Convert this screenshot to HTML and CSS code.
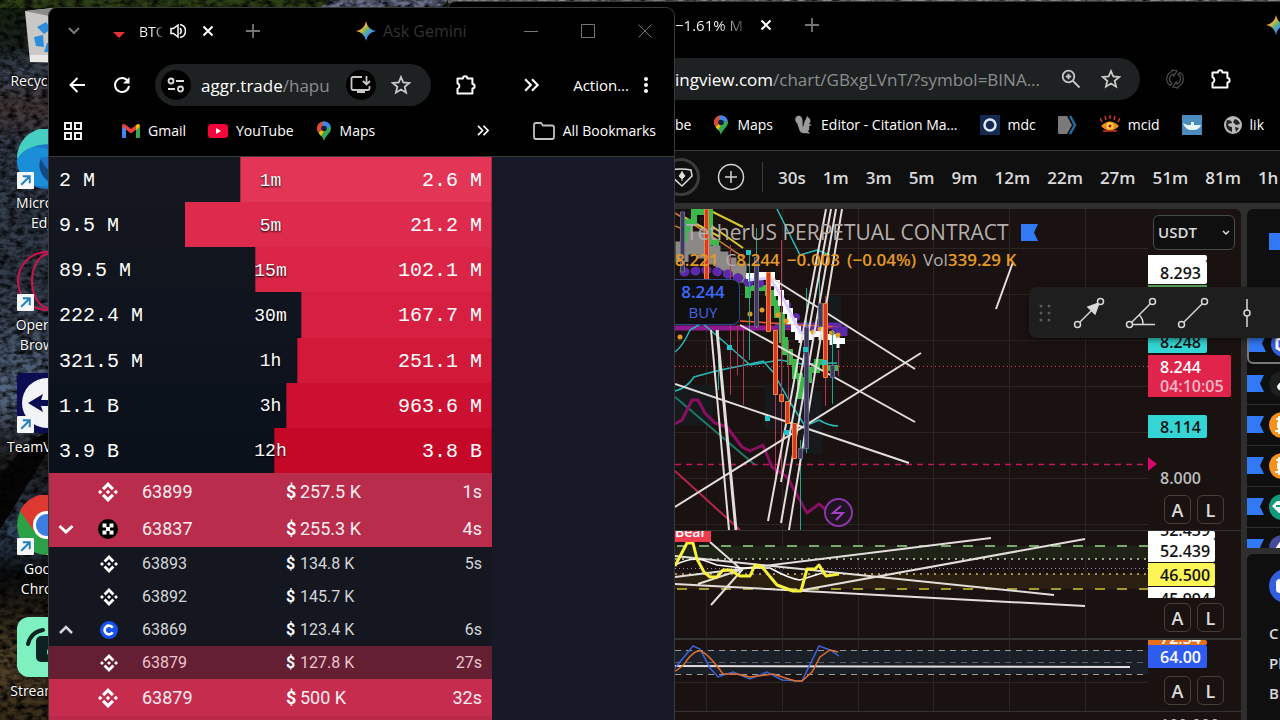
FILE: index.html
```html
<!DOCTYPE html>
<html lang="en">
<head>
    <meta charset="UTF-8">
    <meta name="viewport" content="width=device-width, initial-scale=1.0">
    <title>Desktop</title>
    <link rel="stylesheet" href="styles.css">
</head>
<body>

<!-- Shared icons -->
<svg class="defs" width="0" height="0">
    <defs>
        <linearGradient id="gem" x1="0" y1="0" x2="1" y2="1">
            <stop offset="0" stop-color="#f0453a"/>
            <stop offset=".35" stop-color="#e9b43c"/>
            <stop offset=".5" stop-color="#5fb576"/>
            <stop offset=".65" stop-color="#4a90f0"/>
            <stop offset="1" stop-color="#3b7de8"/>
        </linearGradient>
    </defs>
    <symbol id="i-gemini" viewBox="0 0 20 20"><path fill="url(#gem)" d="M10 0q1.500 8.500 10 10q-8.500 1.500-10 10q-1.500-8.500-10-10q8.500-1.500 10-10z"/></symbol>
    <symbol id="i-close" viewBox="0 0 12 12"><path d="M1.500 1.500l9 9M10.500 1.500l-9 9" fill="none" stroke="currentColor" stroke-width="2"/></symbol>
    <symbol id="i-plus" viewBox="0 0 14 14"><path d="M7 0v14M0 7h14" fill="none" stroke="currentColor" stroke-width="1.800"/></symbol>
    <symbol id="i-star" viewBox="0 0 20 20"><path d="M10 2l2.300 5.500 5.900.5-4.500 3.900 1.400 5.800L10 14.600l-5.100 3.100 1.400-5.800L1.800 8l5.900-.5z" fill="none" stroke="currentColor" stroke-width="1.800"/></symbol>
    <symbol id="i-puzzle" viewBox="0 0 22 22"><path d="M2.500 4.500h5.500a2.200 2.200 0 0 1 4.400 0h5v5.500a2.200 2.200 0 0 1 0 4.400v5H2.500v-4.500a3 3 0 0 0 0-5.600z" fill="none" stroke="currentColor" stroke-width="2" stroke-linejoin="round"/></symbol>
    <symbol id="i-more" viewBox="0 0 14 12"><path d="M1 1l5 5-5 5M7 1l5 5-5 5" fill="none" stroke="currentColor" stroke-width="1.800"/></symbol>
    <symbol id="i-pin" viewBox="0 0 16 20">
        <path fill="#34a853" d="M8 20C7 15 1 12 1 7.500A7 7 0 0 1 15 7.500C15 12 9 15 8 20z"/>
        <path fill="#fbbc04" d="M2.500 12L12 3l-7 12z"/>
        <path fill="#4285f4" d="M6 .8A7 7 0 0 1 14.500 5L8 9z"/>
        <path fill="#ea4335" d="M1 8A7 7 0 0 1 7 .6L5 10 2 11z"/>
        <circle cx="8" cy="7.500" r="2.800" fill="#10213f"/>
    </symbol>
    <symbol id="i-binance" viewBox="0 0 20 20">
        <path fill="currentColor" d="M10 0l6 6-2.200 2.200L10 4.400 6.200 8.200 4 6zM2.200 7.800L4.400 10l-2.200 2.200L0 10zM10 7.800l2.200 2.200-2.200 2.200L7.800 10zM17.800 7.800L20 10l-2.200 2.200-2.200-2.200zM6.200 11.800l3.800 3.800 3.800-3.800L16 14l-6 6-6-6z"/>
    </symbol>
    <symbol id="i-link" viewBox="0 0 16 16"><rect width="16" height="16" rx="1" fill="#f4f6f8"/><path d="M4 12l7.500-7.500M5.500 4h6.500v6.500" fill="none" stroke="#1f7fc2" stroke-width="1.800"/></symbol>
    <symbol id="i-flag" viewBox="0 0 17 17"><path fill="#3179f5" d="M0 0h17l-4 8.500 4 8.500H0z"/></symbol>
</svg>

<svg class="wallpaper" viewBox="0 0 1280 720" preserveAspectRatio="none">
    <defs>
        <linearGradient id="rock" x1="0" y1="0" x2="0" y2="1">
            <stop offset="0" stop-color="#12200c"/>
            <stop offset=".06" stop-color="#1a231c"/>
            <stop offset=".1" stop-color="#3c4656"/>
            <stop offset=".15" stop-color="#463836"/>
            <stop offset=".2" stop-color="#343d4d"/>
            <stop offset=".4" stop-color="#333d4a"/>
            <stop offset=".55" stop-color="#566883"/>
            <stop offset=".64" stop-color="#1c1a1a"/>
            <stop offset=".74" stop-color="#34465f"/>
            <stop offset=".8" stop-color="#0b0c0c"/>
            <stop offset=".92" stop-color="#54432a"/>
            <stop offset="1" stop-color="#362b18"/>
        </linearGradient>
        <filter id="grain" x="0" y="0" width="1" height="1">
            <feTurbulence type="fractalNoise" baseFrequency=".12 .2" numOctaves="4" seed="4"/>
            <feColorMatrix values="0 0 0 0 0  0 0 0 0 0  0 0 0 0 0  2 0 0 0 -.7"/>
        </filter>
    </defs>
    <rect width="1280" height="720" fill="url(#rock)"/>
    <path d="M0 0h330v8H0z" fill="#2c3f16"/>
    <path d="M330 0h118l-6 8H320z" fill="#6a6f8a"/>
    <path d="M448 0h832v3H448z" fill="#8d8a88"/>
    <path d="M0 475l30-35 19-8v18L18 500 0 530z" fill="#060606"/>
    <rect width="1280" height="720" filter="url(#grain)"/>
</svg>

<!-- Desktop shortcuts -->
<nav class="shortcuts">
    <a class="shortcut" href="#">
        <svg width="60" height="60" viewBox="0 0 60 60"><path d="M8 4l28-3 18 5-5 50-36-1z" fill="#c9c8c6"/><path d="M8 4l28-3 18 5-22 3z" fill="#8d8b88"/><path d="M13 48h38v7H13z" fill="#e9e8e6"/><path d="M20 20l9-5 5 7-7 5zM17 30l9-2 1 12-8-1zM30 36h12l-4 9H27z" fill="#2b8ddc"/></svg>
        <span>Recycle Bin</span>
    </a>
    <a class="shortcut" href="#">
        <svg width="60" height="60" viewBox="0 0 60 60"><circle cx="30" cy="30" r="30" fill="#1c76c8"/><path d="M0 30A30 30 0 0 1 60 28C40 8 12 14 0 30z" fill="#45cfc0"/><path d="M0 32C6 14 30 14 40 28H24c-4 6-2 20 12 28C14 62 0 46 0 32z" fill="#1a8fd8"/><path d="M24 30c-4 8 0 20 14 26 8 0 14-6 18-12-14 6-26 0-32-14z" fill="#124a86"/><use href="#i-link" y="43" width="17" height="17"/></svg>
        <span>Microsoft Edge</span>
    </a>
    <a class="shortcut" href="#">
        <svg width="60" height="60" viewBox="0 0 60 60"><g fill="none" stroke="#d0134f" stroke-width="2"><circle cx="30" cy="30" r="29"/><ellipse cx="32" cy="30" rx="17" ry="27"/></g><use href="#i-link" y="43" width="17" height="17"/></svg>
        <span>Opera GX Browser</span>
    </a>
    <a class="shortcut" href="#">
        <svg width="60" height="60" viewBox="0 0 60 60"><rect width="60" height="60" rx="5" fill="#0c0c52"/><circle cx="30" cy="30" r="25" fill="#f2f3f7"/><path d="M11 30l15-9-2 6h12l-2-6 15 9-15 9 2-6H24l2 6z" fill="#0c0c52"/><use href="#i-link" y="43" width="17" height="17"/></svg>
        <span>TeamViewer</span>
    </a>
    <a class="shortcut" href="#">
        <svg width="60" height="60" viewBox="0 0 60 60"><circle cx="30" cy="30" r="30" fill="#2da147"/><path d="M3 16A30 30 0 0 1 57 16H30L17 36z" fill="#dc3a30"/><path d="M57 16A30 30 0 0 1 30 60l12-22-12-22z" fill="#f9c32e"/><circle cx="30" cy="30" r="14" fill="#fff"/><circle cx="30" cy="30" r="11" fill="#3b7de0"/><use href="#i-link" y="43" width="17" height="17"/></svg>
        <span>Google Chrome</span>
    </a>
    <a class="shortcut" href="#">
        <svg width="60" height="60" viewBox="0 0 60 60"><rect width="60" height="60" rx="12" fill="#7ff0c0"/><path d="M11 27q3-12 15-14" fill="none" stroke="#0d2321" stroke-width="4" stroke-linecap="round"/><rect x="19" y="19" width="34" height="26" rx="5" fill="#0d2321"/><circle cx="36" cy="35" r="6" fill="#7ff0c0"/></svg>
        <span>Streamlabs</span>
    </a>
</nav>

<!-- Back window: chart -->
<section class="window window-chart">
    <div class="tabstrip">
        <span class="tab-title tab-fade">−1.61% M</span>
        <button class="icon-btn" aria-label="Close tab"><svg width="12" height="12"><use href="#i-close"/></svg></button>
        <button class="icon-btn muted" aria-label="New tab"><svg width="14" height="14"><use href="#i-plus"/></svg></button>
        <svg class="push" width="20" height="20"><use href="#i-gemini"/></svg>
    </div>
    <div class="toolbar">
        <div class="omnibox">
            <div class="url"><b>ingview.com</b>/chart/GBxgLVnT/?symbol=BINA...</div>
            <button class="icon-btn soft" aria-label="Zoom"><svg width="20" height="20" viewBox="0 0 20 20"><g fill="none" stroke="currentColor" stroke-width="1.800"><circle cx="7.500" cy="7.500" r="5.800"/><path d="M12 12l6.500 6.500M7.500 4.800v5.400M4.800 7.500h5.400"/></g></svg></button>
            <button class="icon-btn soft" aria-label="Bookmark"><svg width="20" height="20"><use href="#i-star"/></svg></button>
        </div>
        <button class="icon-btn" aria-label="Sync"><svg width="20" height="20" viewBox="0 0 20 20"><g fill="none" stroke="#4d4d4d" stroke-width="1.200"><path d="M7 2.500A8 8 0 0 0 5 16.500l2-1.800A5.500 5.500 0 0 1 8 5l1 2 3-5-5-1z"/><path d="M13 17.500A8 8 0 0 0 15 3.500l-2 1.800A5.500 5.500 0 0 1 12 15l-1-2-3 5 5 1z"/></g></svg></button>
        <button class="icon-btn" aria-label="Extensions"><svg width="22" height="22"><use href="#i-puzzle"/></svg></button>
    </div>
    <div class="bookmarks">
        <a href="#">be</a>
        <a href="#"><svg width="16" height="20"><use href="#i-pin"/></svg>Maps</a>
        <a href="#"><svg width="18" height="20" viewBox="0 0 18 20"><path d="M5 1c-4-1-6 3-4 6 2 2 2 4 3 7 1 4 4 5 7 4l4 1-2-3c2-2 1-4 1-5l3-1-3-1c2-2 2-4 0-6l-2-2-1 3c-2 2-2 6-3 8C7 10 9 3 5 1z" fill="#9b9b9b"/></svg>Editor - Citation Ma...</a>
        <a href="#"><svg width="20" height="20" viewBox="0 0 20 20"><rect width="20" height="20" fill="#14294f"/><circle cx="10" cy="10" r="5.500" fill="none" stroke="#dfe6f5" stroke-width="2.500"/></svg>mdc</a>
        <a href="#" aria-label="Bookmark"><svg width="20" height="20" viewBox="0 0 20 20"><path d="M0 2q0-1 1-1h8l5 9-5 9H1q-1 0-1-1z" fill="#7a7a7a"/><path d="M12 1l5 9-5 9" fill="none" stroke="#1f6fa5" stroke-width="2.500"/></svg></a>
        <a href="#"><svg width="20" height="20" viewBox="0 0 20 20"><path d="M1 11q9-9 18 0-9 9-18 0z" fill="#f08a1c"/><circle cx="10" cy="11" r="3.500" fill="#ffd24a"/><circle cx="10" cy="11" r="1.500" fill="#a01010"/><path d="M2 7L0 3M6 5L5 1M10 4V0M14 5l1-4M18 7l2-4M3 16h14" stroke="#d8321c" stroke-width="1.500"/></svg>mcid</a>
        <a href="#" aria-label="Bookmark"><svg width="20" height="20" viewBox="0 0 20 20"><rect width="20" height="20" fill="#4a8cc0"/><path d="M1 8l4 2h4V7h3v3h7q-2 5-7 5H8q-5-1-7-7z" fill="#e8f3fa"/></svg></a>
        <a href="#"><svg width="18" height="18" viewBox="0 0 18 18"><circle cx="9" cy="9" r="9" fill="#b9b9b9"/><path d="M3 4q5 0 5 3l-4 1q0 3 4 3v5q-6-2-6-8zM11 3q4 1 5 5l-4 1-3-3zM11 11l4 1-3 4z" fill="#222"/></svg>lik</a>
    </div>

    <div class="intervals">
        <button class="icon-btn" aria-label="Alert"><svg width="38" height="38" viewBox="0 0 38 38"><circle cx="19" cy="19" r="17.500" fill="none" stroke="#3c3c3c" stroke-width="3"/><path d="M9 12q10-2 20 0l1 6-10 10L9 18z" fill="none" stroke="#dcdcdc" stroke-width="1.500"/><path d="M20 13v10M20 14l3 4-3 3-3-3z" fill="#dcdcdc" stroke="#dcdcdc"/></svg></button>
        <button class="icon-btn" aria-label="Add"><svg width="28" height="28" viewBox="0 0 28 28"><circle cx="14" cy="14" r="12.500" fill="none" stroke="#d4d4d4" stroke-width="1.500"/><path d="M14 8v12M8 14h12" stroke="#d4d4d4" stroke-width="1.500"/></svg></button>
        <span class="divider"></span>
        <button>30s</button>
        <button>1m</button>
        <button>3m</button>
        <button>5m</button>
        <button>9m</button>
        <button>12m</button>
        <button>22m</button>
        <button>27m</button>
        <button>51m</button>
        <button>81m</button>
        <button>1h</button>
    </div>

    <div class="workspace">
        <div class="chart">
            <div class="pane pane-main">
                <svg class="plot" viewBox="675 209 473 321" preserveAspectRatio="xMinYMin slice">
                    <path class="grid" d="M706.500 209v321M782.500 209v321M858.500 209v321M933.500 209v321M1009.500 209v321M1085.500 209v321M675 248.500h473M675 294.500h473M675 340.500h473M675 386.500h473M675 432.500h473M675 478.500h473M675 524.500h473"/>
                    <path fill="#171a1d" d="M675 385h38v40h-38zM765 385h30v45h-30zM793 390h29v64h-29zM826 296h15v85h-15z"/>
                    <path stroke="#1c7a6a" stroke-width="2" fill="none" d="M675 397l80 68"/>
                    <path stroke="#b5254a" stroke-width="2" fill="none" d="M675 471l65 59"/>
                    <path stroke="#e0404f" stroke-dasharray="1 3" d="M675 366.500h473"/>
                    <path stroke="#c2185b" stroke-dasharray="6 5" stroke-width="1.500" d="M675 464.500h473"/>
                    <!-- indicator ribbons -->
                    <path stroke="#8f1a8f" stroke-width="5" fill="none" d="M675 328h105l62-2"/>
                    <path stroke="#5a2aa8" stroke-width="5" fill="none" d="M775 325h63l4 5"/>
                    <path stroke="#f05a28" stroke-width="1.500" fill="none" d="M740 321l60 4 38 2"/>
                    <path stroke="#28b8b8" stroke-width="1.500" fill="none" d="M675 352q8-6 15-22l12-7 28 24 20 18 30-5 22 4 35-1M675 391q12-3 19-14 20-6 56-13l13-3 10 11 17 30 15 24 14-6q10 6 19 6M777 209l23 46 17-5 13 5"/>
                    <path stroke="#8a0f62" stroke-width="3" fill="none" stroke-linejoin="round" d="M675 424l7-4 10-20 6 0 7 13 10 10 12 4 15 20 8 4 13-6 9 22 15 10 20 36 12-9 7 6"/>
                    <path stroke="#d9c82c" stroke-width="2" fill="none" d="M707 209l36 18M706 222l37 26M680 215l40 22"/>
                    <path stroke="#c77a34" stroke-width="1.500" fill="none" d="M675 213l32 20 36 24M675 226l30 12"/>
                    <path stroke="#3db84a" stroke-width="6" fill="none" d="M688 252v-30h6v-10h16v30h6v14M748 298v-10h20v5h5v10h4v12h5v25h3v12h5v10h5v14h5v20h6v-16h3v-10h8v-8h8v6h14"/>
                    <path stroke="#8c8886" stroke-width="13" fill="none" d="M682 262v-14h12v-10h10v14h10v6h8v6h8v6h10v6h6"/>
                    <path stroke="#5a2aa8" stroke-width="9" stroke-dasharray="1 10" stroke-linecap="round" fill="none" d="M684 272l25-2 23 5 18 8h26"/>
                    <path stroke="#5a2aa8" stroke-width="7" fill="none" d="M800 330h22M832 330h12v6"/>
                    <g fill="#5a2aa8"><circle cx="778" cy="291" r="4"/><circle cx="787" cy="305" r="4"/><circle cx="796" cy="317" r="4"/></g>
                    <path stroke="#fff" stroke-width="6" fill="none" d="M746 276h16v-1h10v8h5v10h4v10h5v8h4v10h4v8h4v8h13v-3h14v3h8v4h12"/>
                    <path stroke="#fff" stroke-width="3" fill="none" d="M800 331v12M820 330v10M831 331v14M838 336v12"/>
                    <path stroke="#d9d0ff" stroke-width="3" fill="none" d="M748 280l22-2 14 22 17 34"/>
                    <g fill="#e59a24"><circle cx="680" cy="337" r="2.500"/><circle cx="750" cy="314" r="2.500"/><circle cx="762" cy="310" r="2.500"/><circle cx="778" cy="315" r="2.500"/><circle cx="786" cy="321" r="2.500"/><circle cx="813" cy="332" r="2.500"/><circle cx="820" cy="329" r="2.500"/><circle cx="832" cy="333" r="2.500"/><circle cx="838" cy="335" r="2.500"/></g>
                    <!-- wicks -->
                    <path stroke="#b33655" fill="none" d="M730.500 245v150M737.500 325v50M743.500 325v80M775.500 390v90M781.500 240v242M788.500 340v60M825.500 296v110M838.500 350v26"/>
                    <path stroke="#22a58e" fill="none" d="M749.500 250v110M756.500 228v100M718.500 330v60M806.500 288v165M819.500 270v56M800.500 440v90M832.500 330v74"/>
                    <!-- trend lines -->
                    <g class="trend">
                        <path d="M770 277l145 92M740 325l175 97M675 507l246-154M675 384l234 79"/>
                        <path d="M711 330l18 200"/>
                        <path stroke-width="3" d="M717 330l19 200"/>
                        <path d="M826 209l-58 312M831 209l-50 273M836 209l-55 314M842 209l-53 321M1013 262l-17 47"/>
                    </g>
                    <!-- candles -->
                    <g fill="#d9372c" stroke="#f08a30"><path d="M704.500 209h4v71h-4zM766.500 272.500h4v59h-4zM773.500 330.500h4v64h-4zM779.500 394.500h4v7h-4zM785.500 401.500h4v22h-4zM792.500 423.500h4v35h-4zM823.500 303.500h4v74h-4z"/></g>
                    <g fill="#3d3a5c" stroke="#6a678c"><path d="M680.500 212h4v60h-4zM754.500 257.500h4v69h-4zM804.500 327.500h4v121h-4zM818.500 303.500h4v23h-4zM798.500 448.500h4v10h-4zM830.500 365.500h4v12h-4z"/></g>
                    <path fill="#22c5cc" d="M727 345h5v5h-5zM765 416h5v5h-5zM784 430h5v5h-5zM803 347h5v5h-5zM822 360h5v5h-5zM746 250h5v5h-5z"/>
                    <circle cx="838.500" cy="512.500" r="13.500" fill="#1e1422" stroke="#8e35a8" stroke-width="2"/>
                    <path d="M841 506l-8 7h10l-7 7" fill="none" stroke="#a63fc4" stroke-width="2"/>
                </svg>
                <div class="legend">
                    <h1>TetherUS PERPETUAL CONTRACT <svg width="17" height="17"><use href="#i-flag"/></svg></h1>
                    <p><b>8.221</b><span>C<b>8.244</b></span><b>−0.003</b><b>(−0.04%)</b><span>Vol<b>339.29 K</b></span></p>
                    <button class="buy"><strong>8.244</strong>BUY</button>
                </div>
                <div class="axis">
                    <select class="currency" aria-label="Currency"><option>USDT</option></select>
                    <span class="tag tag-blank white"></span>
                    <span class="tag white">8.293</span>
                    <span class="tag-line"></span>
                    <span class="tag teal">8.248</span>
                    <span class="tag red">8.244<small>04:10:05</small></span>
                    <span class="tag teal">8.114</span>
                    <span class="arrow"></span>
                    <span class="scale">8.000</span>
                    <div class="modes"><button>A</button><button>L</button></div>
                </div>
            </div>

            <div class="pane pane-rsi">
                <svg class="plot" viewBox="675 531 473 107" preserveAspectRatio="xMinYMin slice">
                    <path class="grid" d="M706.500 531v107M782.500 531v107M858.500 531v107M933.500 531v107M1009.500 531v107M1085.500 531v107"/>
                    <path fill="#1f2317" d="M675 546h473v13H675z"/>
                    <path fill="#2a1f10" d="M675 574h473v15H675z"/>
                    <path stroke="#79a86c" stroke-width="2" stroke-dasharray="10 12" d="M677 546h471"/>
                    <path stroke="#c5d5b0" stroke-width="1.500" stroke-dasharray="2 5" d="M675 559h473"/>
                    <path stroke="#9d8fa5" stroke-dasharray="1 3" d="M675 568.500h473"/>
                    <path stroke="#d0b85c" stroke-width="1.500" stroke-dasharray="2 5" d="M675 574h473"/>
                    <path stroke="#a39a2a" stroke-width="2" stroke-dasharray="10 12" d="M677 589h471"/>
                    <g class="trend"><path d="M675 584l410 22M675 556l379 39M803 590l282-51M675 577l316-39M710 542l32 28-31 35M698 584l42-14"/></g>
                    <path stroke="#fff" stroke-width="1.500" fill="none" d="M675 565q15-8 28-5l14 5 25 3h28q20 11 30 12l22-7"/>
                    <path stroke="#f7f13c" stroke-width="3" fill="none" stroke-linejoin="round" d="M675 566l12-23h6l4 16 7 13 6 5h7l6-7h7l10 6h10l5-11 7 2 15 18 16 6h8l6-22h8l4-4 7 11 13-2"/>
                </svg>
                <span class="bear">Bear</span>
                <div class="axis">
                    <span class="tag tag-cut white">52.439</span>
                    <span class="tag white">52.439</span>
                    <span class="tag yellow">46.500</span>
                    <span class="tag tag-top white">45.994</span>
                    <div class="modes"><button>A</button><button>L</button></div>
                </div>
            </div>

            <div class="pane pane-stoch">
                <svg class="plot" viewBox="675 640 473 71" preserveAspectRatio="xMinYMin slice">
                    <path fill="#1a1f28" d="M675 650h473v24H675z"/>
                    <path class="grid" d="M706.500 639v72M782.500 639v72M858.500 639v72M933.500 639v72M1009.500 639v72M1085.500 639v72M675 682.500h473"/>
                    <path stroke="#9a9a9a" stroke-dasharray="6 5" d="M675 650.500h473M675 674.500h473"/>
                    <path stroke="#5a5f66" stroke-dasharray="6 5" d="M675 662.500h473"/>
                    <path class="trend" d="M675 666l455 1"/>
                    <path stroke="#3f62d8" stroke-width="1.500" fill="none" d="M675 668l18-22 7 3 10 19 8 9 15-5 17 7 17-7 15 8 20 1 17-35 11 4 9 6"/>
                    <path stroke="#e0702c" stroke-width="1.500" fill="none" d="M675 671q8-4 12-11 8-10 13-9 8 2 23 23l14 0 13 3 23-3 22 7h7l10-9 8-15 10-7 8 2"/>
                </svg>
                <div class="axis">
                    <span class="tag tag-cut short orange">72.34</span>
                    <span class="tag blue">64.00</span>
                    <div class="modes"><button>A</button><button>L</button></div>
                </div>
            </div>

            <div class="pane pane-last">
                <div class="plot"></div>
                <div class="axis"><span class="scale">100.000</span></div>
            </div>
        </div>

        <aside class="side">
            <div class="card watchlist">
                <svg class="flag" width="17" height="17"><use href="#i-flag"/></svg>
                <div class="row-sym selected"><svg width="50" height="26" viewBox="0 0 50 26"><use href="#i-flag" y="4" width="17" height="17"/><circle cx="35" cy="13" r="13" fill="#345edb"/><path d="M35 5l7 4v8l-7 4-7-4V9z" fill="none" stroke="#fff" stroke-width="3"/></svg></div>
                <div class="row-sym"><svg width="50" height="26" viewBox="0 0 50 26"><use href="#i-flag" y="4" width="17" height="17"/><circle cx="35" cy="13" r="13" fill="#1c1f1f"/><path d="M37 6l-7 9q0 5 7 5z" fill="#fff"/></svg></div>
                <div class="row-sym"><svg width="50" height="26" viewBox="0 0 50 26"><use href="#i-flag" y="4" width="17" height="17"/><circle cx="35" cy="13" r="13" fill="#f7931a"/><path d="M29 7h8v4h-6v4h6v4h-9M32 4v18" fill="none" stroke="#fff" stroke-width="2"/></svg></div>
                <div class="row-sym"><svg width="50" height="26" viewBox="0 0 50 26"><use href="#i-flag" y="4" width="17" height="17"/><circle cx="35" cy="13" r="13" fill="#f7931a"/><path d="M29 7h8v4h-6v4h6v4h-9M32 4v18" fill="none" stroke="#fff" stroke-width="2"/></svg></div>
                <div class="row-sym"><svg width="50" height="26" viewBox="0 0 50 26"><use href="#i-flag" y="4" width="17" height="17"/><circle cx="35" cy="13" r="13" fill="#109c7c"/><path d="M25 12l5-5h10v12h-8z" fill="#fff"/><path d="M29 12h8" stroke="#109c7c" stroke-width="2"/></svg></div>
                <div class="row-sym"><svg width="50" height="26" viewBox="0 0 50 26"><use href="#i-flag" y="4" width="17" height="17"/><circle cx="35" cy="13" r="13" fill="#444c9a"/><path d="M35 4l-7 10h9z" fill="#fff"/></svg></div>
            </div>
            <div class="card details">
                <svg width="34" height="34" viewBox="0 0 34 34"><circle cx="17" cy="17" r="17" fill="#345edb"/><rect x="7" y="10" width="16" height="14" rx="4" fill="#fff"/></svg>
                <span>C</span>
                <span>Pl</span>
                <span>Bl</span>
            </div>
        </aside>
    </div>

    <div class="draw-tools">
        <svg class="grip" width="16" height="20" viewBox="0 0 16 20"><g fill="#5a5a5a"><circle cx="4" cy="3" r="1.500"/><circle cx="12" cy="3" r="1.500"/><circle cx="4" cy="10" r="1.500"/><circle cx="12" cy="10" r="1.500"/><circle cx="4" cy="17" r="1.500"/><circle cx="12" cy="17" r="1.500"/></g></svg>
        <button aria-label="Arrow"><svg width="32" height="32" viewBox="0 0 32 32"><path d="M6 26L26 6"/><path d="M26 6l-4 11-7-7z" fill="#d8d8d8"/><circle cx="4.500" cy="27.500" r="3"/><circle cx="27.500" cy="4.500" r="3"/></svg></button>
        <button aria-label="Trend angle"><svg width="32" height="32" viewBox="0 0 32 32"><path d="M6 26L26 6M7.500 27.500H30M14 18q4 3 4 9" fill="none"/><circle cx="4.500" cy="27.500" r="3"/><circle cx="27.500" cy="4.500" r="3"/></svg></button>
        <button aria-label="Trend line"><svg width="32" height="32" viewBox="0 0 32 32"><path d="M6 26L26 6"/><circle cx="4.500" cy="27.500" r="3"/><circle cx="27.500" cy="4.500" r="3"/></svg></button>
        <button aria-label="Vertical line"><svg width="32" height="32" viewBox="0 0 32 32"><path d="M18 2v11M18 19v11"/><circle cx="18" cy="16" r="3"/></svg></button>
    </div>
</section>

<!-- Front window: trades -->
<section class="window window-trades">
    <div class="tabstrip">
        <button class="icon-btn tab-search muted" aria-label="Search tabs"><svg width="12" height="8" viewBox="0 0 12 8"><path d="M1 1l5 5 5-5" fill="none" stroke="currentColor" stroke-width="2"/></svg></button>
        <svg class="favicon" width="14" height="14" viewBox="0 0 14 14"><path d="M1 8h12l-6 6z" fill="#e53338"/></svg>
        <span class="tab-title tab-fade">BTC</span>
        <svg class="speaker" width="16" height="16" viewBox="0 0 16 16"><path d="M1 5.500h2.500L8 2v12l-4.500-3.500H1z" fill="none" stroke="#fff" stroke-width="1.500"/><path d="M10 5q2.500 3 0 6M10 1.500q5.500 1 5.500 6.500t-5.500 6.500" fill="none" stroke="#fff" stroke-width="1.500"/></svg>
        <button class="icon-btn" aria-label="Close tab"><svg width="12" height="12"><use href="#i-close"/></svg></button>
        <button class="icon-btn muted new-tab" aria-label="New tab"><svg width="14" height="14"><use href="#i-plus"/></svg></button>
        <button class="gemini"><svg width="20" height="20"><use href="#i-gemini"/></svg>Ask Gemini</button>
        <div class="win-btns">
            <button aria-label="Minimize"><svg width="14" height="14" viewBox="0 0 14 14"><path d="M0 7.500h14"/></svg></button>
            <button aria-label="Maximize"><svg width="14" height="14" viewBox="0 0 14 14"><path d="M.5.5h13v13H.5z"/></svg></button>
            <button aria-label="Close"><svg width="14" height="14" viewBox="0 0 14 14"><path d="M.5.5l13 13M13.500.5l-13 13"/></svg></button>
        </div>
    </div>
    <div class="toolbar">
        <button class="icon-btn" aria-label="Back"><svg width="16" height="16" viewBox="0 0 16 16"><path d="M16 8H2M8.500 1L1.500 8l7 7" fill="none" stroke="#fff" stroke-width="2"/></svg></button>
        <button class="icon-btn reload" aria-label="Reload"><svg width="18" height="18" viewBox="0 0 18 18"><path d="M14.800 5A7 7 0 1 0 16 10" fill="none" stroke="#fff" stroke-width="2"/><path d="M16.500 1v6.500H10z" fill="#fff"/></svg></button>
        <div class="omnibox">
            <button class="round" aria-label="Site settings"><svg width="18" height="16" viewBox="0 0 18 16"><g fill="none" stroke="#dcdcdc" stroke-width="1.800"><circle cx="4" cy="4" r="2.500"/><path d="M9 4h8M1 12h7"/><circle cx="13.500" cy="12" r="2.500"/></g></svg></button>
            <div class="url"><b>aggr.trade</b>/hapu</div>
            <button class="round" aria-label="Install"><svg width="22" height="20" viewBox="0 0 22 20"><path d="M12 2H3q-1.500 0-1.500 1.500v10Q1.500 15 3 15h15q1.500 0 1.500-1.500V11M16.500 1v8M13 6l3.500 3.500L20 6" fill="none" stroke="#c8c8c8" stroke-width="1.800"/><path d="M7 15h8v3H7z" fill="#c8c8c8"/></svg></button>
            <button class="icon-btn soft" aria-label="Bookmark"><svg width="20" height="20"><use href="#i-star"/></svg></button>
        </div>
        <button class="icon-btn" aria-label="Extensions"><svg width="22" height="22"><use href="#i-puzzle"/></svg></button>
        <button class="icon-btn overflow" aria-label="More"><svg width="16" height="14"><use href="#i-more"/></svg></button>
        <button class="action">Action...<svg width="4" height="16" viewBox="0 0 4 16"><g fill="#fff"><circle cx="2" cy="2" r="2"/><circle cx="2" cy="8" r="2"/><circle cx="2" cy="14" r="2"/></g></svg></button>
    </div>
    <div class="bookmarks">
        <a href="#" aria-label="Apps"><svg width="18" height="18" viewBox="0 0 18 18"><path d="M1 1h6v6H1zM11 1h6v6h-6zM1 11h6v6H1zM11 11h6v6h-6z" fill="none" stroke="#f0f0f0" stroke-width="2"/></svg></a>
        <a href="#" class="gmail"><svg width="18" height="14" viewBox="0 0 18 14"><path d="M0 2h4v12H1q-1 0-1-1z" fill="#4285f4"/><path d="M14 2h4v11q0 1-1 1h-3z" fill="#34a853"/><path d="M14 1q4-2.500 4 1.500L14 6z" fill="#fbbc04"/><path d="M4 1q-4-2.500-4 1.500l9 7 5-3.700V1L9 5z" fill="#ea4335"/></svg>Gmail</a>
        <a href="#"><svg width="20" height="14" viewBox="0 0 20 14"><rect width="20" height="14" rx="3.500" fill="#f4053a"/><path d="M8 4l5 3-5 3z" fill="#fff"/></svg>YouTube</a>
        <a href="#"><svg width="16" height="20"><use href="#i-pin"/></svg>Maps</a>
        <a href="#" class="push" aria-label="More bookmarks"><svg width="13" height="11"><use href="#i-more"/></svg></a>
        <a href="#" class="all"><svg width="22" height="18" viewBox="0 0 22 18"><path d="M1 3q0-2 2-2h5l2 2.500h9q2 0 2 2V15q0 2-2 2H3q-2 0-2-2z" fill="none" stroke="#c0c0c0" stroke-width="1.800"/></svg>All Bookmarks</a>
    </div>

    <div class="page">
        <div class="feed">
            <table class="stats">
                <tr class="s1" style="--sell:56.8%"><td>2 M</td><th>1m</th><td>2.6 M</td></tr>
                <tr class="s2" style="--sell:69.2%"><td>9.5 M</td><th>5m</th><td>21.2 M</td></tr>
                <tr class="s3" style="--sell:53.4%"><td>89.5 M</td><th>15m</th><td>102.1 M</td></tr>
                <tr class="s4" style="--sell:43.2%"><td>222.4 M</td><th>30m</th><td>167.7 M</td></tr>
                <tr class="s5" style="--sell:44.1%"><td>321.5 M</td><th>1h</th><td>251.1 M</td></tr>
                <tr class="s6" style="--sell:46.6%"><td>1.1 B</td><th>3h</th><td>963.6 M</td></tr>
                <tr class="s7" style="--sell:49.1%"><td>3.9 B</td><th>12h</th><td>3.8 B</td></tr>
            </table>
            <table class="trades">
                <tr class="big"><td></td><td><svg><use href="#i-binance"/></svg></td><td>63899</td><td><b>$</b>257.5 K</td><td>1s</td></tr>
                <tr class="big"><td><svg class="caret" viewBox="0 0 16 10"><path d="M1.500 2L8 8l6.500-6" fill="none" stroke="#fff" stroke-width="3"/></svg></td><td><svg viewBox="0 0 20 20"><circle cx="10" cy="10" r="10" fill="#000"/><path d="M4.500 4.500h4v4h-4zM11.500 4.500h4v4h-4zM8 8h4v4H8zM4.500 11.500h4v4h-4zM11.500 11.500h4v4h-4z" fill="#fff"/></svg></td><td>63837</td><td><b>$</b>255.3 K</td><td>4s</td></tr>
                <tr><td></td><td><svg><use href="#i-binance"/></svg></td><td>63893</td><td><b>$</b>134.8 K</td><td>5s</td></tr>
                <tr><td></td><td><svg><use href="#i-binance"/></svg></td><td>63892</td><td><b>$</b>145.7 K</td><td></td></tr>
                <tr><td><svg class="caret" viewBox="0 0 16 10"><path d="M2 8l6-6 6 6" fill="none" stroke="#d4d6da" stroke-width="2.500"/></svg></td><td><svg viewBox="0 0 20 20"><circle cx="10" cy="10" r="10" fill="#1652f0"/><path d="M14 7.500A4.800 4.800 0 1 0 14 12.500" fill="none" stroke="#fff" stroke-width="3"/></svg></td><td>63869</td><td><b>$</b>123.4 K</td><td>6s</td></tr>
                <tr class="mid"><td></td><td><svg><use href="#i-binance"/></svg></td><td>63879</td><td><b>$</b>127.8 K</td><td>27s</td></tr>
                <tr class="big hot"><td></td><td><svg><use href="#i-binance"/></svg></td><td>63879</td><td><b>$</b>500 K</td><td>32s</td></tr>
            </table>
        </div>
    </div>
</section>

</body>
</html>
```
FILE: styles.css
```css
* {
    box-sizing: border-box;
}
body {
    margin: 0;
    height: 100vh;
    overflow: hidden;
    position: relative;
    background: #1a1f26;
    color: #fff;
    font-family: "Open Sans", "Noto Sans", sans-serif;
    font-size: 14px;
}
button {
    padding: 0;
    border: 0;
    background: none;
    color: inherit;
    font: inherit;
}
a {
    color: inherit;
    text-decoration: none;
}
svg {
    display: block;
    flex: none;
}
table {
    width: 100%;
    border-collapse: collapse;
    table-layout: fixed;
}
.defs {
    position: absolute;
}
.wallpaper {
    position: absolute;
    inset: 0;
    width: 100%;
    height: 100%;
}

/* Desktop shortcuts */
.shortcuts {
    position: absolute;
    top: 7px;
    left: 0;
    width: 94px;
    display: grid;
    grid-auto-rows: 122px;
}
.shortcut {
    display: flex;
    flex-direction: column;
    align-items: center;
    gap: 4px;
    line-height: 20px;
    text-align: center;
    text-shadow: 0 1px 2px #000, 0 0 2px #000;
}
.shortcut span {
    max-width: 80px;
}

/* Browser windows */
.window {
    position: absolute;
    display: flex;
    flex-direction: column;
    bottom: 0;
    background: #000;
    border: 1px solid #3a3a3a;
    border-bottom: 0;
    border-radius: 9px 9px 0 0;
    overflow: hidden;
}
.window-trades {
    top: 7px;
    left: 48px;
    width: 627px;
}
.window-chart {
    top: 1px;
    left: 447px;
    right: 0;
    padding-left: 227px;
    border-right: 0;
    border-radius: 9px 0 0 0;
}
.tabstrip, .toolbar, .bookmarks {
    display: flex;
    align-items: center;
    flex: none;
    white-space: nowrap;
}
.tabstrip {
    height: 46px;
}
.toolbar {
    height: 62px;
}
.bookmarks {
    height: 41px;
    padding-bottom: 11px;
    border-bottom: 1px solid #3c3c3c;
}
.bookmarks a {
    display: flex;
    align-items: center;
    gap: 8px;
}
.icon-btn {
    display: flex;
    align-items: center;
    justify-content: center;
}
.muted {
    color: #777;
}
.soft {
    color: #c8c8c8;
}
.push {
    margin-left: auto;
}
.tab-fade {
    background: linear-gradient(to right, #fff 65%, #444);
    background-clip: text;
    -webkit-background-clip: text;
    color: transparent;
}
.omnibox {
    display: flex;
    align-items: center;
    height: 42px;
    background: #1e2122;
    border-radius: 21px;
}
.url {
    flex: 1;
    font-size: 17px;
    color: #8b8e90;
}
.url b {
    color: #fff;
    font-weight: 400;
}
.round {
    display: flex;
    align-items: center;
    justify-content: center;
    width: 30px;
    height: 30px;
    border-radius: 50%;
    background: #000;
}

/* Front window chrome */
.tab-search {
    width: 50px;
}
.window-trades .favicon {
    margin-left: 13px;
}
.window-trades .tab-title {
    width: 23px;
    margin-left: 13px;
    overflow: hidden;
}
.speaker {
    margin: 0 16px 0 8px;
}
.new-tab {
    margin-left: 32px;
}
.gemini {
    display: flex;
    align-items: center;
    gap: 7px;
    margin-left: 96px;
    color: #333;
    font-size: 16px;
}
.win-btns {
    display: flex;
    gap: 43px;
    margin-left: auto;
    margin-right: 22px;
}
.win-btns path {
    fill: none;
    stroke: #777;
}
.window-trades .toolbar {
    padding: 0 26px 0 20px;
}
.reload {
    margin-left: 28px;
}
.window-trades .omnibox {
    width: 276px;
    margin: 0 24px;
    padding: 0 20px 0 6px;
    gap: 10px;
}
.window-trades .omnibox .soft {
    margin-left: 5px;
}
.overflow {
    margin-left: 47px;
}
.action {
    display: flex;
    align-items: center;
    gap: 15px;
    margin-left: auto;
    font-size: 15px;
}
.window-trades .bookmarks {
    padding-left: 15px;
    padding-right: 18px;
    gap: 22px;
}
.window-trades .gmail {
    margin-left: 18px;
}
.window-trades .all {
    margin-left: 21px;
}

/* Trade feed */
.page {
    flex: 1;
    background: #171a26;
}
.feed {
    width: 443px;
    min-height: 100%;
    background: #b8294a;
}
.stats {
    height: 316px;
    font-family: "Liberation Mono", monospace;
    font-size: 20px;
}
.stats tr {
    background: linear-gradient(to left, var(--c) var(--sell), var(--bg) 0);
}
.s1 { --c: #e33556; --bg: #14171f; }
.s2 { --c: #de2a4c; --bg: #13161f; }
.s3 { --c: #da2547; --bg: #11151e; }
.s4 { --c: #d61f41; --bg: #10141e; }
.s5 { --c: #d2193a; --bg: #0e131d; }
.s6 { --c: #cc1031; --bg: #0c121c; }
.s7 { --c: #c60828; --bg: #0a111b; }
.stats td, .stats th {
    padding: 2px 10px 0;
    text-align: left;
}
.stats th {
    text-align: center;
    font-weight: 400;
    font-size: 18px;
    text-shadow: 0 1px 2px #000;
}
.stats td:last-child {
    text-align: right;
}
.trades {
    font-family: Roboto, sans-serif;
    font-size: 16px;
    color: #d4d6da;
}
.trades tr {
    height: 33px;
    background: #14171f;
}
.trades .big {
    height: 37px;
    background: #b92c4c;
    color: #fbeef1;
    font-size: 18px;
}
.trades .mid {
    background: #641f33;
    color: #ecc5ce;
}
.trades .hot {
    background: #c52c4e;
}
.trades td {
    padding: 0;
}
.trades td:nth-child(1) {
    width: 49px;
    padding-left: 9px;
}
.trades td:nth-child(2) {
    width: 44px;
}
.trades td:nth-child(3) {
    width: 144px;
}
.trades td:last-child {
    width: 80px;
    padding-right: 10px;
    text-align: right;
}
.trades td b {
    display: inline-block;
    width: 14px;
    color: #fff;
}
.trades svg {
    width: 18px;
    height: 18px;
    margin-left: 2px;
    color: #fff;
}
.trades .big svg {
    width: 20px;
    height: 20px;
    margin-left: 0;
}
.trades svg.caret, .trades .big svg.caret {
    width: 16px;
    height: 10px;
    margin-left: 0;
}

/* Back window chrome */
.window-chart .tabstrip .icon-btn {
    margin-left: 17px;
}
.window-chart .tabstrip .muted {
    margin-left: 33px;
}
.window-chart .tabstrip .push {
    margin-right: -6px;
}
.window-chart .tab-title {
    width: 68px;
    font-size: 15px;
}
.window-chart .toolbar {
    gap: 25px;
    padding-right: 48px;
}
.window-chart .omnibox {
    flex: 1;
    border-radius: 0 21px 21px 0;
    padding-right: 19px;
    gap: 20px;
}
.window-chart .bookmarks {
    gap: 22px;
}
.intervals {
    display: flex;
    align-items: center;
    flex: none;
    height: 52px;
    gap: 17px;
    background: #0f0f0f;
    color: #dbdbdb;
    font-size: 17px;
    font-weight: 600;
    white-space: nowrap;
    overflow: hidden;
}
.intervals .icon-btn:first-child {
    margin-left: -13px;
}
.divider {
    width: 1px;
    height: 30px;
    margin-right: -2px;
    background: #3c3c3c;
}

/* Chart */
.workspace {
    flex: 1;
    display: flex;
    gap: 6px;
    padding-top: 6px;
    background: #2e2e2e;
    min-height: 0;
}
.chart {
    flex: 1;
    min-width: 0;
    overflow: hidden;
    border-radius: 0 6px 0 0;
    background: #1a1210;
}
.pane {
    position: relative;
    display: flex;
    overflow: hidden;
    border-bottom: 1px solid #333;
}
.pane-main { height: 322px; }
.pane-rsi { height: 109px; border-bottom-width: 2px; }
.pane-stoch { height: 72px; }
.pane-last { height: 40px; }
.plot {
    flex: 1;
    min-width: 0;
    height: 100%;
}
.grid {
    fill: none;
    stroke: #2a2422;
}
.trend {
    fill: none;
    stroke: #e3dedb;
    stroke-width: 2;
}
.axis {
    width: 93px;
    display: flex;
    flex-direction: column;
    align-items: flex-start;
    font-size: 16px;
    font-weight: 600;
    line-height: 24px;
}
.currency {
    appearance: none;
    width: 82px;
    height: 35px;
    margin: 6px 0 5px 5px;
    padding: 0 4px 2px;
    border: 1px solid #4a4a4a;
    border-radius: 6px;
    background: #0f0f0f url("data:image/svg+xml,%3Csvg xmlns='http://www.w3.org/2000/svg' width='8' height='6'%3E%3Cpath d='M1 1l3 3 3-3' fill='none' stroke='%23ddd' stroke-width='1.500'/%3E%3C/svg%3E") no-repeat right 4px center;
    color: #dbdbdb;
    font: 600 15px "Open Sans", sans-serif;
}
.tag {
    flex: none;
    min-width: 59px;
    height: 23px;
    padding: 0 5px 0 12px;
    border-radius: 0 2px 2px 0;
    color: #131313;
}
.tag-blank {
    height: 6px;
}
.tag-cut {
    display: flex;
    align-items: flex-end;
    height: 8px;
    overflow: hidden;
    line-height: 18px;
}
.tag-cut.short {
    height: 5px;
    line-height: 14px;
}
.tag-top {
    height: 11px;
    overflow: hidden;
}
.white { background: #fff; }
.teal { background: #33d6d4; }
.yellow { background: #fbf556; margin: 1px 0; }
.orange { background: #e8701c; color: #fff; }
.blue { background: #2f5cf0; color: #fff; }
.tag-line {
    width: 59px;
    height: 3px;
    margin: 1px 0 42px;
    background: #5cab5c;
}
.red {
    height: 42px;
    min-width: 83px;
    margin: 2px 0 18px;
    padding-top: 2px;
    background: #e0244c;
    color: #fff;
    line-height: 20px;
}
.red small {
    display: block;
    font-size: 16px;
    line-height: 18px;
    color: #f8b8c6;
}
.arrow {
    margin-top: 19px;
    border: 7px solid transparent;
    border-left: 9px solid #d6096b;
    border-right: 0;
}
.scale {
    padding-left: 12px;
    line-height: 14px;
    color: #bdbdbd;
}
.modes {
    display: flex;
    gap: 6px;
    margin: 10px 0 0 16px;
}
.modes button {
    width: 27px;
    height: 29px;
    border: 1px solid #454038;
    border-radius: 6px;
    color: #dbdbdb;
    font-size: 18px;
}
.pane-rsi .modes {
    margin-top: 5px;
}
.pane-stoch .modes {
    margin-top: 8px;
}
.pane-last .scale {
    padding-top: 6px;
}
.legend {
    position: absolute;
    top: 9px;
    left: 0;
}
.legend h1 {
    display: flex;
    align-items: center;
    gap: 12px;
    margin: 0 0 0 11px;
    font-size: 21px;
    font-weight: 400;
    line-height: 28px;
    color: #b3afae;
    white-space: nowrap;
}
.legend p {
    display: flex;
    gap: 7px;
    margin: 2px 0 0;
    font-size: 17px;
    line-height: 24px;
    color: #b3afae;
    white-space: nowrap;
}
.legend b {
    color: #e59a24;
    font-weight: 600;
}
.buy {
    display: flex;
    flex-direction: column;
    align-items: center;
    justify-content: center;
    width: 65px;
    height: 46px;
    margin-top: 7px;
    padding-right: 8px;
    border: 1px solid #2a4a8c;
    border-left: 0;
    border-radius: 0 8px 8px 0;
    background: #0f0f0f;
    color: #4166e0;
    font-size: 15px;
    line-height: 20px;
}
.buy strong {
    font-size: 17px;
    font-weight: 600;
    color: #3f68ff;
}
.bear {
    position: absolute;
    top: 0;
    left: 0;
    width: 36px;
    height: 11px;
    overflow: hidden;
    background: #ee3d4f;
    font-size: 14px;
    font-weight: 600;
    line-height: 2px;
}

/* Side panel */
.side {
    width: 33px;
    display: flex;
    flex-direction: column;
    gap: 6px;
    overflow: hidden;
}
.card {
    background: #0f0f0f;
    border-radius: 6px 0 0 0;
    overflow: hidden;
}
.watchlist {
    height: 339px;
    flex: none;
}
.flag {
    margin: 24px 0 73px 22px;
}
.row-sym {
    display: flex;
    align-items: center;
    height: 41px;
    border-bottom: 1px solid #2e2e2e;
}
.row-sym.selected {
    border: 2px solid #777;
    border-radius: 6px;
    margin-right: -8px;
}
.details {
    flex: 1;
    display: flex;
    flex-direction: column;
    padding: 15px 0 0 22px;
    font-size: 15px;
    font-weight: 600;
    line-height: 30px;
    color: #dbdbdb;
}
.details svg {
    margin-bottom: 15px;
}

/* Floating drawing tools */
.draw-tools {
    position: absolute;
    top: 285px;
    right: 0;
    display: flex;
    align-items: center;
    gap: 20px;
    width: 251px;
    height: 51px;
    padding-left: 8px;
    border-radius: 8px 0 0 8px;
    background: #1e1e1e;
    box-shadow: 0 2px 6px rgba(0, 0, 0, 0.5);
    overflow: hidden;
}
.draw-tools button path, .draw-tools button circle {
    stroke: #d8d8d8;
    stroke-width: 1.5;
}
.draw-tools button circle {
    fill: #1e1e1e;
}
```
